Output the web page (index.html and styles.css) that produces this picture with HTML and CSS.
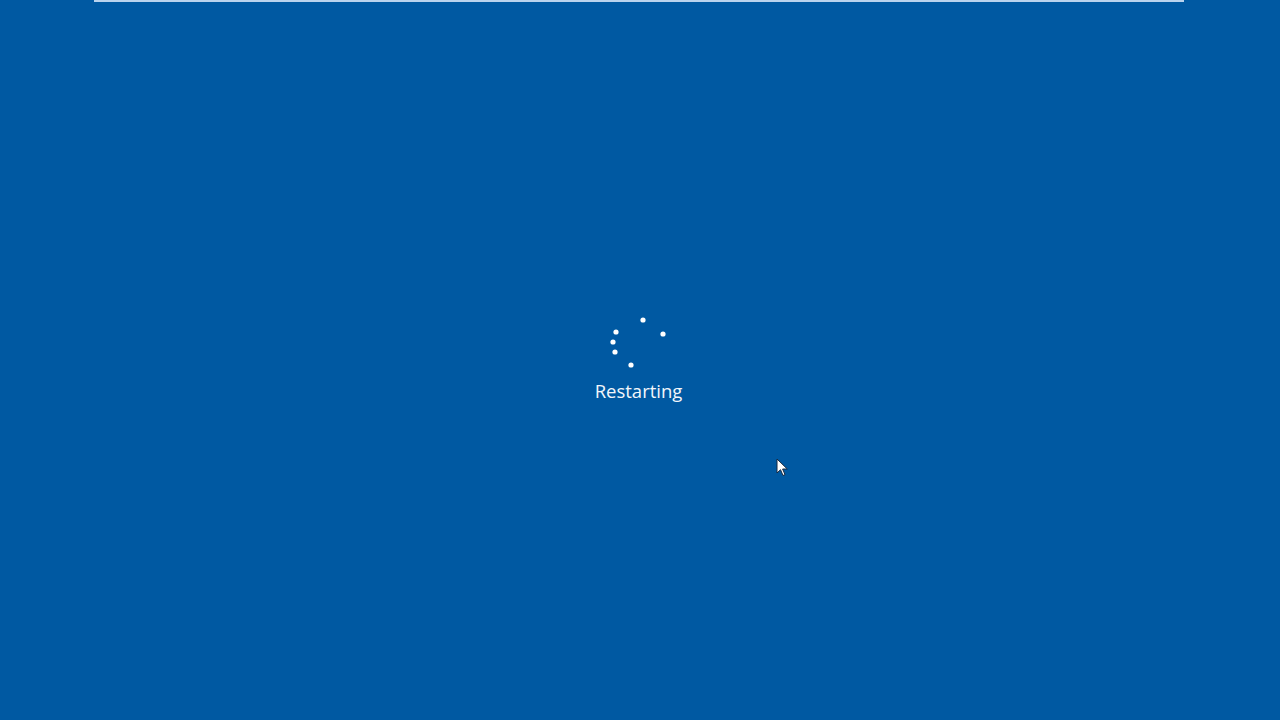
FILE: index.html
```html
<!DOCTYPE html>
<html lang="en">
<head>
<meta charset="utf-8">
<title>Restarting</title>
<link rel="stylesheet" href="styles.css">
</head>
<body>
<div class="progress-line"></div>
<main class="status">
  <svg class="spinner" width="60" height="56" viewBox="0 0 60 56" aria-hidden="true">
    <circle cx="35" cy="6" r="2.6"/>
    <circle cx="55" cy="20" r="2.6"/>
    <circle cx="8" cy="18" r="2.6"/>
    <circle cx="5" cy="28" r="2.6"/>
    <circle cx="7" cy="38" r="2.6"/>
    <circle cx="23" cy="51" r="2.6"/>
  </svg>
  <div class="label">Restarting</div>
</main>
<svg class="cursor" width="14" height="20" viewBox="0 0 14 20" aria-hidden="true">
  <path d="M1 1 L1 15 L4.5 11.7 L7 17.5 L9 16.6 L6.6 11 L11.3 11 Z" fill="#fff" stroke="#1a2a40" stroke-width="1" stroke-linejoin="round"/>
</svg>
</body>
</html>
```
FILE: styles.css
```css
html, body {
  margin: 0;
  padding: 0;
  width: 1280px;
  height: 720px;
  overflow: hidden;
}
body {
  background: #0059a2;
  font-family: "Open Sans", "Noto Sans", sans-serif;
  color: #fff;
  position: relative;
  display: flex;
  flex-direction: column;
}
.progress-line {
  height: 2px;
  margin: 0 96px 0 94px;
  background: #b9d3ee;
}
.status {
  display: flex;
  flex-direction: column;
  align-items: center;
  padding-top: 312px;
}
.spinner {
  display: block;
  margin-left: -4px;
  fill: #fff;
}
.label {
  margin-top: 9px;
  margin-left: -3px;
  font-size: 18.5px;
  line-height: 24px;
  color: #f2f6fb;
}
.cursor {
  position: absolute;
  left: 776px;
  top: 458px;
}
```
